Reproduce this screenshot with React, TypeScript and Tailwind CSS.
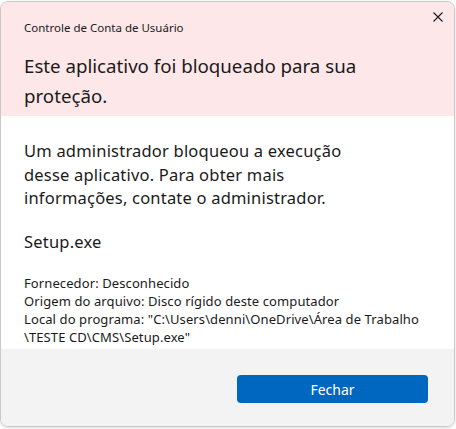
export default function App() {
  return (
    <div className="h-[429px] w-[456px] bg-white pt-px" style={{ fontFamily: '"Noto Sans", sans-serif' }}>
      <div className="flex h-[426px] w-[455px] flex-col overflow-hidden rounded-lg border border-[#c9c9c9] shadow-[0_1px_3px_rgba(0,0,0,0.15)]">
        {/* header */}
        <div className="relative h-[114px] shrink-0 bg-[#fde7e9] px-[23px] pt-[17px]">
          <button type="button" className="absolute right-[8px] top-[7px] flex h-4 w-4 items-center justify-center">
            <svg width="10" height="10" viewBox="0 0 10 10" fill="none" stroke="#1a1a1a" strokeWidth="1.1">
              <path d="M0.5 0.5 L9.5 9.5 M9.5 0.5 L0.5 9.5" />
            </svg>
          </button>
          <div className="text-[11.5px] leading-[18px] text-[#1a1a1a]">Controle de Conta de Usuário</div>
          <div className="mt-[14px] text-[18.7px] leading-[30px] text-[#1a1a1a]">
            Este aplicativo foi bloqueado para sua proteção.
          </div>
        </div>

        {/* body */}
        <div className="h-[233px] shrink-0 bg-white px-[23px] pt-[23px] text-[#1a1a1a]">
          <p className="w-[345px] text-[16.5px] leading-[23.5px] tracking-[0.2px]">
            Um administrador bloqueou a execução desse aplicativo. Para obter mais informações, contate o administrador.
          </p>
          <p className="mt-[20px] text-[16.5px] leading-[23px] tracking-[0.2px]">Setup.exe</p>
          <div className="mt-[21px] text-[13px] leading-[18px] tracking-[0.1px]">
            <div>Fornecedor: Desconhecido</div>
            <div>Origem do arquivo: Disco rígido deste computador</div>
            <div>
              Local do programa: "C:\Users\denni\OneDrive\Área de Trabalho
              <br />
              \TESTE CD\CMS\Setup.exe"
            </div>
          </div>
        </div>

        {/* footer */}
        <div className="flex flex-1 justify-end bg-[#f3f3f3] pr-[26px] pt-[26px]">
          <button type="button" className="h-[28px] w-[191px] rounded-[4px] bg-[#0067c0] text-[14px] text-white">
            Fechar
          </button>
        </div>
      </div>
    </div>
  );
}
